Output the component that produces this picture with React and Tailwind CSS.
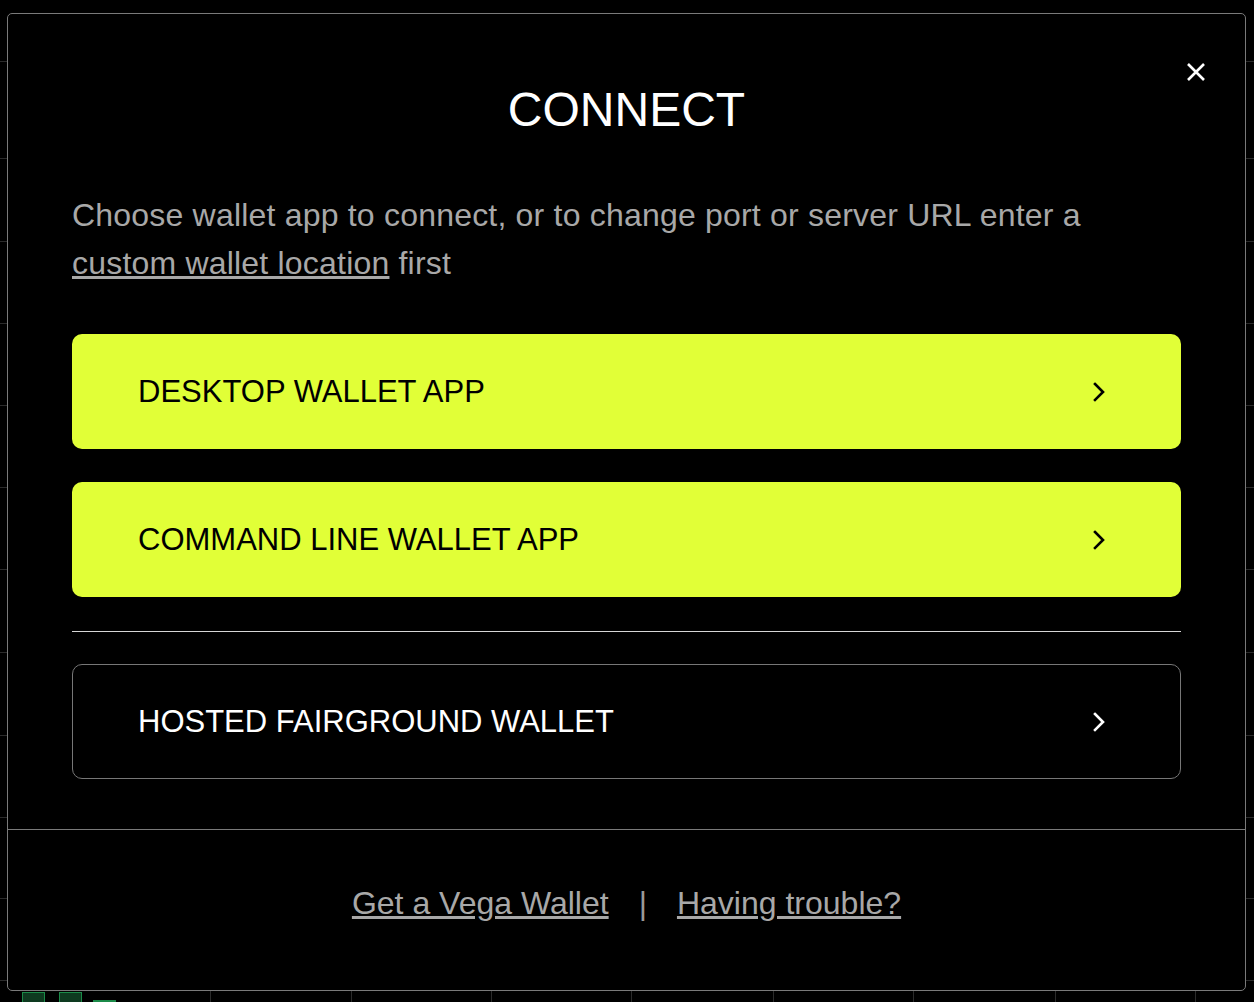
const gridRows = [61, 158, 241, 323, 405, 487, 569, 652, 735, 817, 898, 980];
const gridCols = [210, 351, 491, 631, 773, 913, 1055, 1195];

const ChartBackdrop = () => {
  return (
    <div className="absolute inset-0">
      {gridRows.map((y) => (
        <div key={y} className="absolute left-0 right-0 h-px bg-[#2b2b2b]" style={{ top: y }} />
      ))}
      {gridCols.map((x) => (
        <div key={x} className="absolute top-[991px] bottom-0 w-px bg-[#2b2b2b]" style={{ left: x }} />
      ))}
      <div className="absolute left-[22px] top-[992px] w-[23px] h-[12px] border border-[#1b8a48] bg-[#0e3a20]" />
      <div className="absolute left-[59px] top-[992px] w-[23px] h-[12px] border border-[#1b8a48] bg-[#0e3a20]" />
      <div className="absolute left-[93px] top-[1000px] w-[23px] h-[4px] bg-[#1b8a48]" />
    </div>
  );
};

const Chevron = ({ color }) => (
  <svg width="12" height="20" viewBox="0 0 12 20" fill="none">
    <path d="M2 2 L10 10 L2 18" stroke={color} strokeWidth="2.6" strokeLinecap="square" />
  </svg>
);

const WalletButton = ({ label, variant }) => {
  const yellow = variant === "yellow";
  return (
    <button
      className={
        yellow
          ? "flex items-center justify-between w-full h-[115px] rounded-[10px] bg-[#e1ff37] text-black pl-[66px] pr-[76px]"
          : "flex items-center justify-between w-full h-[115px] rounded-[10px] border border-[#777] text-white pl-[65px] pr-[75px]"
      }
    >
      <span className="text-[31px] leading-[48px]">{label}</span>
      <Chevron color={yellow ? "#000" : "#fff"} />
    </button>
  );
};

const App = () => {
  return (
    <div className="relative min-h-screen h-[1002px] bg-black overflow-hidden font-['Liberation_Sans',Arial,sans-serif]">
      <ChartBackdrop />
      <div className="relative pt-[13px] pl-[7px]">
        <div className="flex flex-col w-[1239px] h-[978px] border border-[#7a7a7a] rounded-[5px] bg-black">
          <div className="relative px-16 pt-[72px] pb-[50px]">
            <button className="absolute top-[48px] right-[39px]">
              <svg width="20" height="20" viewBox="0 0 20 20" fill="none">
                <path d="M2 2 L18 18 M18 2 L2 18" stroke="#fff" strokeWidth="2.6" />
              </svg>
            </button>
            <h1 className="text-center text-white text-[48px] leading-[48px]">CONNECT</h1>
            <p className="mt-[57px] text-[#a8a8a8] text-[32px] leading-[48px] tracking-[0.2px]">
              Choose wallet app to connect, or to change port or server URL enter a
              <br />
              <a className="underline cursor-pointer">custom wallet location</a> first
            </p>
            <div className="mt-[47px] flex flex-col gap-[33px]">
              <WalletButton label="DESKTOP WALLET APP" variant="yellow" />
              <WalletButton label="COMMAND LINE WALLET APP" variant="yellow" />
            </div>
            <div className="mt-[34px] mb-[32px] h-px bg-[#d6d6d6]" />
            <WalletButton label="HOSTED FAIRGROUND WALLET" variant="outline" />
          </div>
          <div className="flex-1 border-t border-[#7a7a7a] flex justify-center pt-[49px]">
            <div className="flex items-center text-[32px] leading-[48px] text-[#a8a8a8] h-[48px]">
              <a className="underline cursor-pointer">Get a Vega Wallet</a>
              <span className="px-[30px] text-[#9a9a9a]">|</span>
              <a className="underline cursor-pointer">Having trouble?</a>
            </div>
          </div>
        </div>
      </div>
    </div>
  );
};

export default App;
